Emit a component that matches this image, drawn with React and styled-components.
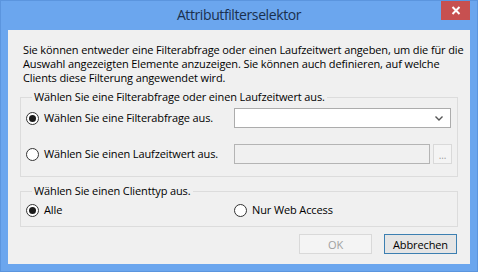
import React from "react";
import styled, { createGlobalStyle } from "styled-components";

const GlobalStyle = createGlobalStyle`
  html, body {
    margin: 0;
    padding: 0;
    background: #6ba6ee;
  }
  * {
    box-sizing: border-box;
  }
`;

const Window = styled.div`
  width: 478px;
  height: 272px;
  display: flex;
  flex-direction: column;
  background-color: #6ba6ee;
  border: 1px solid #5b95de;
  font-family: "Open Sans", "Noto Sans", sans-serif;
  font-size: 11px;
  letter-spacing: -0.12px;
  color: #000;
`;

const TitleBar = styled.div`
  height: 29px;
  display: grid;
  grid-template-columns: 1fr auto 1fr;
  align-items: start;
`;

const Title = styled.div`
  grid-column: 2;
  padding-top: 5px;
  font-size: 14px;
  line-height: 18px;
  letter-spacing: -0.4px;
  color: #1a2f4d;
`;

const CloseButton = styled.div`
  grid-column: 3;
  justify-self: end;
  width: 29px;
  height: 19px;
  margin-right: 7px;
  background-color: #c75050;
  display: flex;
  align-items: center;
  justify-content: center;
`;

const Client = styled.div`
  margin: 0 7px 7px 7px;
  flex: 1;
  background-color: #f0f0f0;
  display: flex;
  flex-direction: column;
  padding: 13px 12px 10px 12px;
`;

const Description = styled.p`
  margin: 0 0 5px 3px;
  line-height: 14px;
  white-space: nowrap;
`;

const Group = styled.fieldset`
  margin: 0;
  padding: 0 6px ${({ $bottom }) => $bottom}px 5px;
  border: 1px solid #dcdcdc;
  min-width: 0;
`;

const Legend = styled.legend`
  margin-left: 6px;
  padding: 0 2px;
  line-height: 14px;
`;

const Rows = styled.div`
  display: grid;
  grid-template-columns: 208px 1fr;
  row-gap: ${({ $gap }) => $gap}px;
  align-items: center;
  margin-top: ${({ $top }) => $top}px;
`;

const RadioLabel = styled.label`
  display: flex;
  align-items: center;
  gap: 5px;
  line-height: 14px;
  white-space: nowrap;
`;

const RadioCircle = styled.span`
  width: 13px;
  height: 13px;
  border-radius: 50%;
  border: 1px solid #333;
  background-color: #fff;
  display: flex;
  align-items: center;
  justify-content: center;
  flex-shrink: 0;
  &::after {
    content: "";
    width: 7px;
    height: 7px;
    border-radius: 50%;
    background-color: ${({ $checked }) => ($checked ? "#1a1a1a" : "transparent")};
  }
`;

const Combo = styled.div`
  height: 20px;
  background-color: #fff;
  border: 1px solid #acacac;
  display: flex;
  align-items: center;
  justify-content: flex-end;
  padding-right: 7px;
`;

const FieldRow = styled.div`
  display: flex;
  gap: 3px;
`;

const TextBox = styled.div`
  flex: 1;
  height: 20px;
  background-color: #f0f0f0;
  border: 1px solid #b4b4b4;
`;

const EllipsisButton = styled.div`
  width: 19px;
  height: 20px;
  border: 1px solid #d9d9d9;
  background-color: #f4f4f4;
  color: #a0a0a0;
  display: flex;
  align-items: center;
  justify-content: center;
  font-size: 10px;
  line-height: 1;
  padding-top: 2px;
  margin-right: -1px;
`;

const Gap = styled.div`
  height: ${({ $h }) => $h}px;
`;

const Buttons = styled.div`
  display: flex;
  justify-content: flex-end;
  gap: 12px;
  padding-right: 1px;
`;

const Button = styled.div`
  width: 73px;
  height: 20px;
  display: flex;
  align-items: center;
  justify-content: center;
  border: 1px solid ${({ $default, $disabled }) =>
    $default ? "#3c7fb1" : $disabled ? "#d9d9d9" : "#acacac"};
  background-color: ${({ $disabled }) => ($disabled ? "#f4f4f4" : "#e5e5e5")};
  color: ${({ $disabled }) => ($disabled ? "#a0a0a0" : "#000")};
`;

const Radio = ({ checked, children }) => (
  <RadioLabel>
    <RadioCircle $checked={checked} />
    {children}
  </RadioLabel>
);

const App = () => {
  return (
    <>
      <GlobalStyle />
      <Window>
        <TitleBar>
          <Title>Attributfilterselektor</Title>
          <CloseButton>
            <svg width="10" height="9" viewBox="0 0 10 9">
              <path d="M1.5 1 L8.5 8 M8.5 1 L1.5 8" stroke="#fff" strokeWidth="2" />
            </svg>
          </CloseButton>
        </TitleBar>
        <Client>
          <Description>
            Sie können entweder eine Filterabfrage oder einen Laufzeitwert angeben, um die für die
            <br />
            Auswahl angezeigten Elemente anzuzeigen. Sie können auch definieren, auf welche
            <br />
            Clients diese Filterung angewendet wird.
          </Description>
          <Group $bottom={12}>
            <Legend>Wählen Sie eine Filterabfrage oder einen Laufzeitwert aus.</Legend>
            <Rows $gap={16} $top={4}>
              <Radio checked>Wählen Sie eine Filterabfrage aus.</Radio>
              <Combo>
                <svg width="8" height="5" viewBox="0 0 8 5">
                  <path d="M0.5 0.5 L4 4 L7.5 0.5" stroke="#555" strokeWidth="1.4" fill="none" />
                </svg>
              </Combo>
              <Radio>Wählen Sie einen Laufzeitwert aus.</Radio>
              <FieldRow>
                <TextBox />
                <EllipsisButton>...</EllipsisButton>
              </FieldRow>
            </Rows>
          </Group>
          <Gap $h={7} />
          <Group $bottom={9}>
            <Legend>Wählen Sie einen Clienttyp aus.</Legend>
            <Rows $gap={0} $top={5}>
              <Radio checked>Alle</Radio>
              <Radio>Nur Web Access</Radio>
            </Rows>
          </Group>
          <Gap $h={7} />
          <Buttons>
            <Button $disabled>OK</Button>
            <Button $default>Abbrechen</Button>
          </Buttons>
        </Client>
      </Window>
    </>
  );
};

export default App;
